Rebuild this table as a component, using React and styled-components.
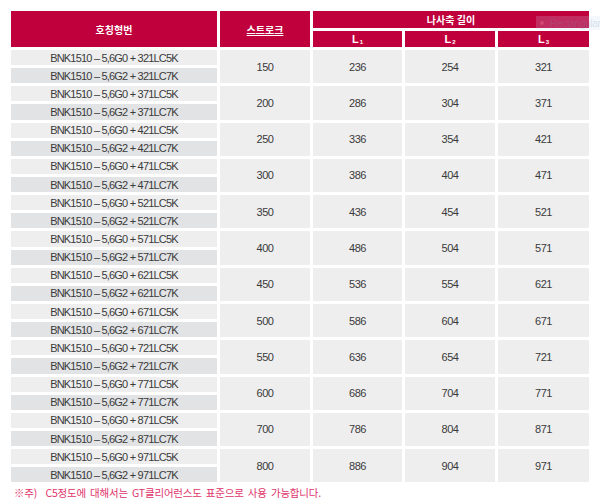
import React from 'react';
import styled, { createGlobalStyle } from 'styled-components';

const Global = createGlobalStyle`
  body {
    margin: 0;
    background: #ffffff;
    font-family: "Liberation Sans", "Noto Sans CJK KR", sans-serif;
  }
`;

const Page = styled.div`
  position: relative;
  width: 600px;
  height: 504px;
  padding: 11px 0 0 11px;
  box-sizing: border-box;
  overflow: hidden;
`;

const Table = styled.div`
  display: grid;
  grid-template-columns: 206px 90px 89px 90px 91px;
  grid-template-rows: 17px 16px repeat(24, 15.15px);
  column-gap: 3px;
  row-gap: 3px;
  width: 578px;
`;

const Head = styled.div`
  background: #c0003c;
  color: #ffffff;
  font-family: "Noto Sans CJK KR", "Liberation Sans", sans-serif;
  font-weight: 700;
  font-size: 10px;
  display: flex;
  align-items: center;
  justify-content: center;
  grid-column: ${p => p.$col};
  grid-row: ${p => p.$row};
  text-decoration: ${p => (p.$under ? 'underline' : 'none')};
`;

const Label = styled.span`
  font-family: "Liberation Sans", sans-serif;
  font-size: 11px;
`;

const Sub = styled.sub`
  font-size: 6px;
  vertical-align: baseline;
  position: relative;
  top: 1px;
  margin-left: 1px;
`;

const Model = styled.div`
  background: ${p => (p.$dark ? '#e2e3e5' : '#eeeeef')};
  color: #3a3a3a;
  font-size: 11px;
  letter-spacing: -0.8px;
  display: flex;
  align-items: center;
  justify-content: center;
  white-space: nowrap;
`;

const Cell = styled.div`
  background: #eeeeef;
  color: #3a3a3a;
  font-size: 11px;
  letter-spacing: -0.4px;
  display: flex;
  align-items: center;
  justify-content: center;
  grid-row: span 2;
`;

const Note = styled.div`
  margin-top: 3px;
  margin-left: 3px;
  color: #e0346c;
  font-family: "Noto Sans CJK KR", "Liberation Sans", sans-serif;
  font-size: 10.5px;
  letter-spacing: -0.2px;
  word-spacing: 2px;
`;

const Hint = styled.div`
  position: absolute;
  top: 16px;
  left: 536px;
  width: 64px;
  height: 14px;
  background: rgba(200, 220, 245, 0.2);
  color: rgba(120, 140, 170, 0.25);
  font-size: 10px;
  letter-spacing: -0.3px;
  display: flex;
  align-items: center;
  gap: 6px;
  padding-left: 4px;
  box-sizing: border-box;
  overflow: hidden;
  white-space: nowrap;
`;

const Dot = styled.span`
  flex: none;
  width: 4px;
  height: 4px;
  border-radius: 50%;
  background: rgba(240, 120, 150, 0.35);
`;

const groups = [
  [150, 321, 236, 254],
  [200, 371, 286, 304],
  [250, 421, 336, 354],
  [300, 471, 386, 404],
  [350, 521, 436, 454],
  [400, 571, 486, 504],
  [450, 621, 536, 554],
  [500, 671, 586, 604],
  [550, 721, 636, 654],
  [600, 771, 686, 704],
  [700, 871, 786, 804],
  [800, 971, 886, 904],
];

export default function App() {
  return (
    <Page>
      <Global />
      <Table>
        <Head $col="1" $row="1 / span 2">호칭형번</Head>
        <Head $col="2" $row="1 / span 2" $under>스트로크</Head>
        <Head $col="3 / span 3" $row="1">나사축 길이</Head>
        {[1, 2, 3].map(n => (
          <Head key={n} $col={String(n + 2)} $row="2">
            <Label>L<Sub>{n}</Sub></Label>
          </Head>
        ))}
        {groups.map(([stroke, l3, l1, l2]) => (
          <React.Fragment key={stroke}>
            <Model>BNK1510 – 5,6G0 + {l3}LC5K</Model>
            <Cell>{stroke}</Cell>
            <Cell>{l1}</Cell>
            <Cell>{l2}</Cell>
            <Cell>{l3}</Cell>
            <Model $dark>BNK1510 – 5,6G2 + {l3}LC7K</Model>
          </React.Fragment>
        ))}
      </Table>
      <Note>※주)&nbsp; C5정도에 대해서는 GT클리어런스도 표준으로 사용 가능합니다.</Note>
      <Hint><Dot />Rectangular</Hint>
    </Page>
  );
}
